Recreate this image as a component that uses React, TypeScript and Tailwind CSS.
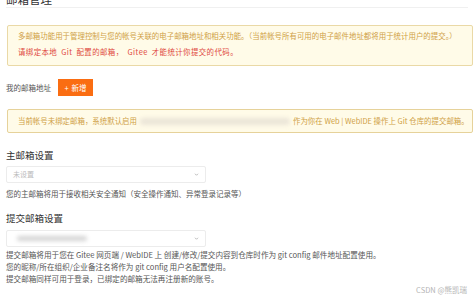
import React from 'react';

const font = { fontFamily: '"Noto Sans CJK SC", "Noto Sans", sans-serif' };

const Caret: React.FC = () => (
    <svg className="w-[5px] h-[5px] text-[#bcbcbc]" viewBox="0 0 10 10" fill="none" stroke="currentColor" strokeWidth="2">
        <path d="M2 3.5l3 3 3-3" />
    </svg>
);

const App: React.FC = () => {
    return (
        <div className="w-[474px] h-[299px] overflow-hidden bg-white relative" style={font}>
            <div className="px-[6px]">
                <div className="-mt-[7px] h-[12px] text-[11.5px] leading-[12px] text-[#333]">邮箱管理</div>
                <div className="mt-[2px] border-t border-[#f0f0f0]"></div>
            </div>

            {/* info box */}
            <div className="mt-[17px] ml-[7px] w-[466px] h-[41px] border border-[#ead9a6] bg-[#fffbe8] rounded-[2px] pl-[10px] pt-[2px] text-[7.45px] leading-[16px] whitespace-nowrap">
                <div className="text-[#cf9f46]">
                    多邮箱功能用于管理控制与您的帐号关联的电子邮箱地址和相关功能。（当前帐号所有可用的电子邮件地址都将用于统计用户的提交。）
                </div>
                <div className="text-[#e0493e] tracking-[0.4px] [word-spacing:2px]">请绑定本地 Git 配置的邮箱， Gitee 才能统计你提交的代码。</div>
            </div>

            <div className="mt-[13px] px-[6px] flex items-center h-[17px]">
                <span className="text-[7.5px] text-[#555] w-[52px]">我的邮箱地址</span>
                <button
                    type="button"
                    className="w-[35px] h-[17px] bg-[#fa6d12] text-white text-[7.5px] flex items-center justify-center gap-[3px]"
                >
                    <span>+</span>
                    <span>新增</span>
                </button>
            </div>

            <div className="mt-[13px] ml-[7px] w-[466px] h-[24px] border border-[#e6d29a] bg-[#fffbe8] rounded-[2px] pl-[10px] flex items-center text-[7.45px] text-[#cf9f46] whitespace-nowrap">
                <span>当前帐号未绑定邮箱，系统默认启用</span>
                <span className="inline-block w-[150px] h-[7px] mx-[3px] rounded-full bg-[#ebe5d8] blur-[2px]"></span>
                <span>作为你在 Web | WebIDE 操作上 Git 仓库的提交邮箱。</span>
            </div>

            <div className="px-[6px]">
                <div className="mt-[15px] text-[9.5px] leading-[14px] text-[#333]">主邮箱设置</div>
                <div className="mt-[4px] w-[200px] h-[17px] border border-[#ececec] rounded-[2px] flex items-center justify-between pl-[6px] pr-[6px]">
                    <span className="text-[7px] text-[#bbb]">未设置</span>
                    <Caret />
                </div>
                <div className="mt-[5px] text-[7.5px] leading-[12px] text-[#555] whitespace-nowrap">
                    您的主邮箱将用于接收相关安全通知（安全操作通知、异常登录记录等）
                </div>

                <div className="mt-[11px] text-[9.5px] leading-[14px] text-[#333]">提交邮箱设置</div>
                <div className="mt-[5px] w-[200px] h-[17px] border border-[#ececec] rounded-[2px] flex items-center justify-between pl-[10px] pr-[6px]">
                    <span className="inline-block w-[70px] h-[5px] rounded-full bg-[#d4d4d4] blur-[2px]"></span>
                    <Caret />
                </div>
                <div className="mt-[2px] text-[7.6px] leading-[12px] text-[#555] whitespace-nowrap">
                    <div>提交邮箱将用于您在 Gitee 网页端 / WebIDE 上 创建/修改/提交内容到仓库时作为 git config 邮件地址配置使用。</div>
                    <div>您的昵称/所在组织/企业备注名将作为 git config 用户名配置使用。</div>
                    <div>提交邮箱同样可用于登录，已绑定的邮箱无法再注册新的账号。</div>
                </div>
            </div>

            <div className="absolute right-[7px] bottom-[4px] text-[7.5px] text-[#b5b5b5]">CSDN @熊凯瑞</div>
        </div>
    );
};

export default App;
